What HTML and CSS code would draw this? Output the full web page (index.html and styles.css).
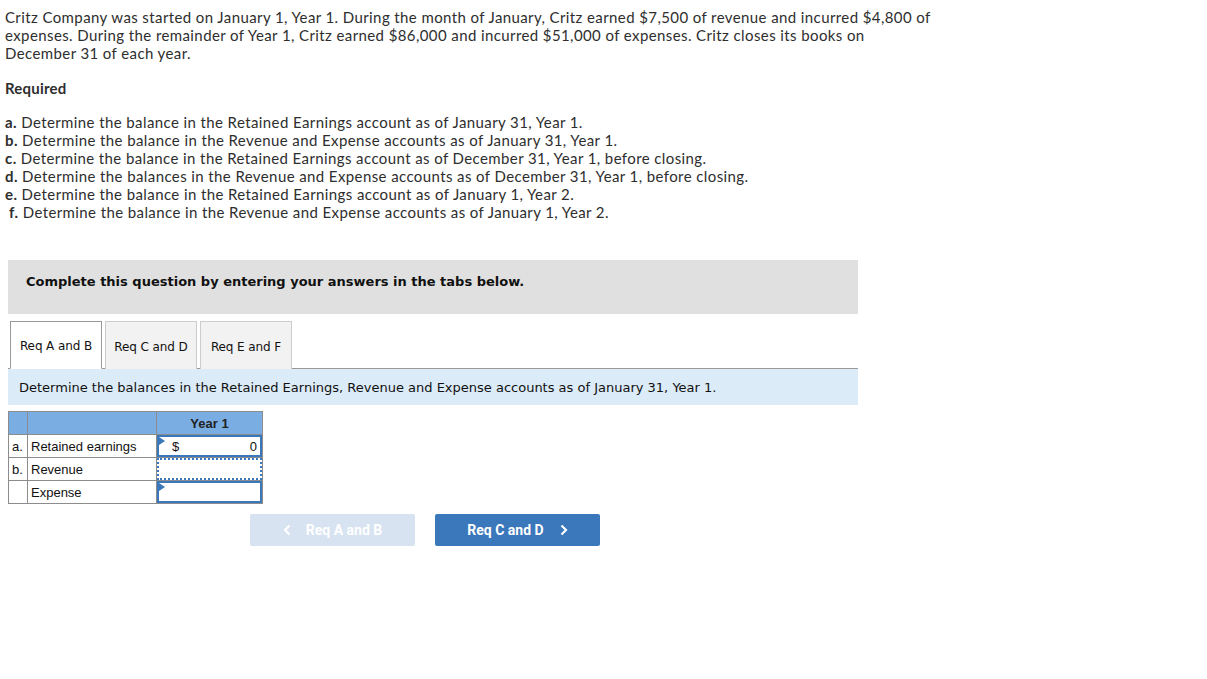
FILE: index.html
```html
<!DOCTYPE html>
<html>
<head>
<meta charset="utf-8">
<link rel="stylesheet" href="styles.css">
</head>
<body>
<div class="intro">
  <p class="para">Critz Company was started on January 1, Year 1. During the month of January, Critz earned $7,500 of revenue and incurred $4,800 of expenses. During the remainder of Year 1, Critz earned $86,000 and incurred $51,000 of expenses. Critz closes its books on December 31 of each year.</p>
  <p class="req">Required</p>
  <ul class="reqlist">
    <li><b>a.</b> Determine the balance in the Retained Earnings account as of January 31, Year 1.</li>
    <li><b>b.</b> Determine the balance in the Revenue and Expense accounts as of January 31, Year 1.</li>
    <li><b>c.</b> Determine the balance in the Retained Earnings account as of December 31, Year 1, before closing.</li>
    <li><b>d.</b> Determine the balances in the Revenue and Expense accounts as of December 31, Year 1, before closing.</li>
    <li><b>e.</b> Determine the balance in the Retained Earnings account as of January 1, Year 2.</li>
    <li class="f"><b>f.</b> Determine the balance in the Revenue and Expense accounts as of January 1, Year 2.</li>
  </ul>
</div>
<div class="work">
  <div class="banner">Complete this question by entering your answers in the tabs below.</div>
  <div class="tabs">
    <div class="tab active">Req A and B</div>
    <div class="tab">Req C and D</div>
    <div class="tab">Req E and F</div>
  </div>
  <div class="instr">Determine the balances in the Retained Earnings, Revenue and Expense accounts as of January 31, Year 1.</div>
  <table class="grid">
    <colgroup><col class="w1"><col class="w2"><col class="w3"></colgroup>
    <tr class="head"><td></td><td></td><td>Year 1</td></tr>
    <tr><td class="c1">a.</td><td class="c2">Retained earnings</td><td class="inp"><div class="box"><span class="flag"></span><span>$</span><span>0</span></div></td></tr>
    <tr><td class="c1">b.</td><td class="c2">Revenue</td><td class="inp"><div class="box dotted"></div></td></tr>
    <tr><td class="c1"></td><td class="c2">Expense</td><td class="inp"><div class="box"><span class="flag"></span></div></td></tr>
  </table>
  <div class="navs">
    <div class="btn prev"><svg class="chev left" width="8" height="12" viewBox="0 0 8 12"><path d="M6.5 1.5 L2 6 L6.5 10.5" fill="none" stroke="#fff" stroke-width="2.2"/></svg>Req A and B</div>
    <div class="btn next">Req C and D<svg class="chev right" width="8" height="12" viewBox="0 0 8 12"><path d="M1.5 1.5 L6 6 L1.5 10.5" fill="none" stroke="#fff" stroke-width="2.2"/></svg></div>
  </div>
</div>
</body>
</html>
```
FILE: styles.css
```css
body {
  margin: 0;
  background: #fff;
  font-family: "Lato", "Open Sans", sans-serif;
  color: #2e2e2e;
}
.intro {
  padding: 8px 5px 0 5px;
  font-size: 15px;
  line-height: 18px;
  letter-spacing: 0.4px;
}
.para {
  margin: 0;
  width: 930px;
}
.req {
  margin: 17px 0 0 0;
  font-weight: bold;
  letter-spacing: 0.2px;
}
.reqlist {
  list-style: none;
  margin: 16px 0 0 0;
  padding: 0;
}
.reqlist li.f { padding-left: 4px; }
.work {
  margin: 39px 0 0 8px;
  width: 850px;
}
.banner {
  background: #e0e0e0;
  height: 54px;
  box-sizing: border-box;
  padding: 14px 0 0 18px;
  font-family: "DejaVu Sans", Verdana, sans-serif;
  font-weight: bold;
  font-size: 13px;
  line-height: 16px;
  color: #111;
}
.tabs {
  display: flex;
  gap: 3px;
  margin-top: 7px;
  padding-left: 2px;
  border-bottom: 1px solid #999;
}
.tab {
  width: 92px;
  box-sizing: border-box;
  height: 48px;
  padding-top: 2px;
  display: flex;
  align-items: center;
  justify-content: center;
  font-family: "DejaVu Sans", Verdana, sans-serif;
  font-size: 12px;
  letter-spacing: -0.1px;
  color: #111;
  background: #f2f2f2;
  border: 1px solid #ccc;
  border-bottom: none;
  margin-bottom: -1px;
}
.tab.active {
  background: #fff;
  border-color: #999;
  border-bottom: 1px solid #fff;
}
.instr {
  background: #dbebf8;
  height: 36px;
  display: flex;
  align-items: center;
  padding-left: 11px;
  font-family: "DejaVu Sans", Verdana, sans-serif;
  font-size: 13px;
  color: #111;
}
.grid {
  margin-top: 6px;
  border-collapse: collapse;
  table-layout: fixed;
  width: 254px;
  font-family: "Liberation Sans", Arial, sans-serif;
  font-size: 13px;
  color: #111;
}
.grid .w1 { width: 19px; }
.grid .w2 { width: 129px; }
.grid .w3 { width: 106px; }
.grid td {
  border: 1px solid #8c8c8c;
  height: 22px;
  padding: 0;
  white-space: nowrap;
}
.grid .c1 { padding-left: 3px; }
.grid .c2 { padding-left: 3px; }
.grid .head td {
  background: #7aaee3;
  font-weight: bold;
  text-align: center;
  color: #222;
}
.grid td.inp {
  position: relative;
}
.box {
  position: absolute;
  inset: 0;
  border: 2px solid #3a77bb;
  display: flex;
  justify-content: space-between;
  align-items: center;
  padding: 0 3px 0 13px;
}
.box.dotted { border-style: dotted; }
.flag {
  position: absolute;
  left: 0;
  top: 0;
  width: 0;
  height: 0;
  border-top: 4px solid transparent;
  border-bottom: 4px solid transparent;
  border-left: 6px solid #3a77bb;
}
.navs {
  display: flex;
  gap: 20px;
  margin: 10px 0 0 242px;
}
.btn {
  width: 165px;
  height: 32px;
  border-radius: 2px;
  display: flex;
  align-items: center;
  justify-content: center;
  font-family: "Roboto", sans-serif;
  font-weight: bold;
  font-size: 14px;
  color: #fff;
}
.btn.prev { background: #d7e3f1; }
.btn.next { background: #3a77bb; }
.chev.left { margin-right: 15px; }
.chev.right { margin-left: 16px; }
```
